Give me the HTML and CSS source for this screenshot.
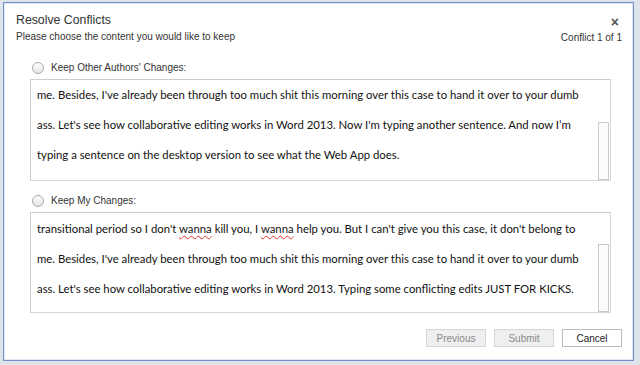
FILE: index.html
```html
<!DOCTYPE html>
<html>
<head>
<meta charset="utf-8">
<link rel="stylesheet" href="styles.css">
</head>
<body>
<div class="dialog">
  <div class="header">
    <div class="titles">
      <div class="title">Resolve Conflicts</div>
      <div class="subtitle">Please choose the content you would like to keep</div>
    </div>
    <div class="meta">
      <div class="close">×</div>
      <div class="count">Conflict 1 of 1</div>
    </div>
  </div>
  <div class="option first">
    <label class="choice"><span class="radio"></span>Keep Other Authors' Changes:</label>
    <div class="textbox tb1">
      <p>me. Besides, I've already been through too much shit this morning over this case to hand it over to your dumb</p>
      <p>ass. Let's see how collaborative editing works in Word 2013. Now I'm typing another sentence. And now I’m</p>
      <p>typing a sentence on the desktop version to see what the Web App does.</p>
      <div class="thumb t1"></div>
    </div>
  </div>
  <div class="option second">
    <label class="choice"><span class="radio"></span>Keep My Changes:</label>
    <div class="textbox tb2">
      <p>transitional period so I don't <span class="sp">wanna</span> kill you, I <span class="sp">wanna</span> help you. But I can't give you this case, it don't belong to</p>
      <p>me. Besides, I've already been through too much shit this morning over this case to hand it over to your dumb</p>
      <p>ass. Let's see how collaborative editing works in Word 2013. Typing some conflicting edits JUST FOR KICKS.</p>
      <div class="thumb t2"></div>
    </div>
  </div>
  <div class="footer">
    <button class="btn disabled">Previous</button>
    <button class="btn disabled">Submit</button>
    <button class="btn">Cancel</button>
  </div>
</div>
</body>
</html>
```
FILE: styles.css
```css
html, body {
  margin: 0;
  padding: 0;
  background: #dfe3ea;
  width: 640px;
  height: 365px;
  overflow: hidden;
}
.dialog {
  box-sizing: border-box;
  margin: 2px 0 0 3px;
  width: 631px;
  height: 359px;
  background: #fff;
  border: 1px solid #7292c9;
  box-shadow: inset 0 0 0 1px #dfe6f3;
  font-family: "Liberation Sans", Arial, sans-serif;
  color: #333;
  display: flex;
  flex-direction: column;
}
.header {
  display: flex;
  justify-content: space-between;
  padding: 10px 11px 0 12px;
}
.title {
  font-size: 12.3px;
  line-height: 15px;
  color: #333;
}
.subtitle {
  font-size: 10px;
  line-height: 13px;
  margin-top: 2px;
  color: #333;
}
.meta {
  display: flex;
  flex-direction: column;
  align-items: flex-end;
}
.close {
  font-size: 14px;
  line-height: 14px;
  font-weight: bold;
  color: #555;
  margin-top: 2px;
  margin-right: 3px;
}
.count {
  font-size: 10px;
  line-height: 13px;
  margin-top: 2px;
}
.option {
  display: flex;
  flex-direction: column;
  padding: 0 22px 0 26px;
}
.option.first { margin-top: 17px; }
.option.second { margin-top: 13px; }
.choice {
  display: flex;
  align-items: center;
  font-size: 10px;
  line-height: 14px;
  color: #333;
  padding-left: 2px;
  margin-bottom: 4px;
}
.radio {
  box-sizing: border-box;
  width: 12px;
  height: 12px;
  border-radius: 50%;
  border: 1px solid #a9a9a9;
  background: linear-gradient(#fdfdfd, #e6e6e6);
  margin-right: 7px;
}
.textbox {
  position: relative;
  box-sizing: border-box;
  border: 1px solid #d3d8de;
  border-top-color: #c9ced5;
  border-left-color: #c9ced5;
  padding: 0 0 0 6px;
  font-family: Lato, "Open Sans", sans-serif;
  font-size: 11.35px;
  color: #111;
}
.tb1 { height: 102px; }
.tb2 { height: 101px; padding-top: 1px; }
.textbox p {
  margin: 0;
  line-height: 30px;
  white-space: nowrap;
}
.sp {
  text-decoration: underline wavy #e0302a;
  text-decoration-thickness: 1px;
  text-underline-offset: 2px;
}
.thumb {
  position: absolute;
  right: 1px;
  bottom: 0;
  width: 11px;
  box-sizing: border-box;
  border: 1px solid #c6cbd1;
  background: #fbfbfb;
}
.t1 { top: 42px; }
.t2 { top: 31px; }
.footer {
  display: flex;
  justify-content: flex-end;
  gap: 8px;
  padding: 16px 11px 0 0;
}
.btn {
  box-sizing: border-box;
  width: 60px;
  height: 18px;
  padding: 0;
  font-family: "Liberation Sans", Arial, sans-serif;
  font-size: 10px;
  color: #222;
  background: #fff;
  border: 1px solid #b9bec4;
  border-radius: 0;
}
.btn.disabled {
  color: #8a8a8a;
  background: #efefef;
  border-color: #d3d6da;
}
```
